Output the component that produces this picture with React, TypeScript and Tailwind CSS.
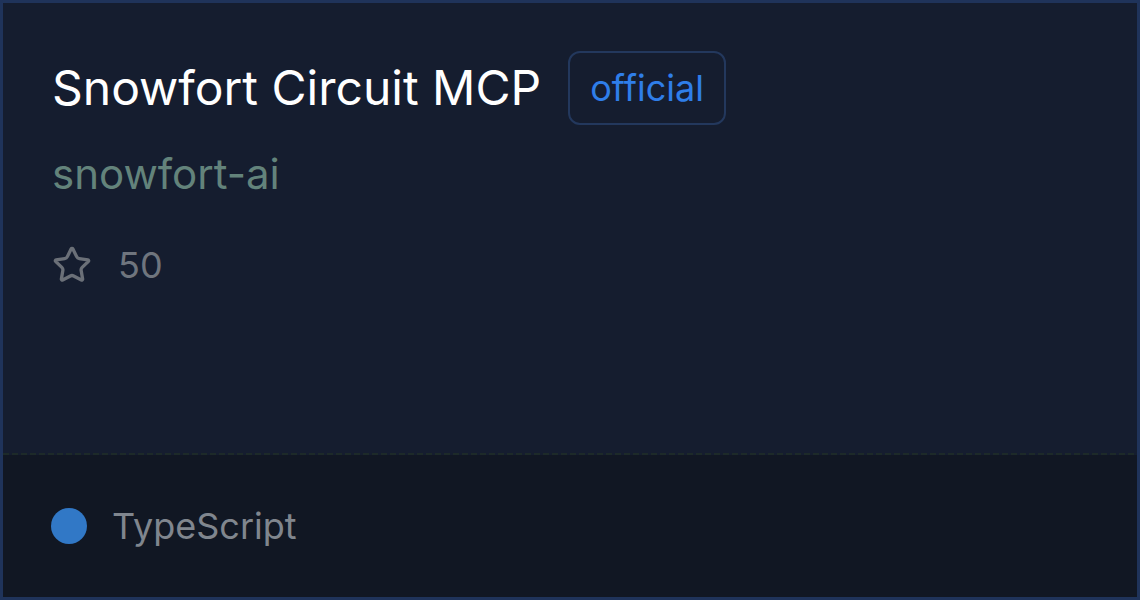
import React from "react";

export default function App() {
  return (
    <div
      className="w-[1140px] h-[600px] border-[3px] border-[#1f335a] bg-[#151d2f] flex flex-col overflow-hidden"
      style={{ fontFamily: "Inter, 'Noto Sans', sans-serif" }}
    >
      <div className="flex-1 pl-[49px] pt-[48px] flex flex-col">
        <div className="flex items-center gap-[27px]">
          <h1 className="text-[48px] leading-[58px] text-white font-normal">
            Snowfort Circuit MCP
          </h1>
          <span className="border-2 border-[#23385d] rounded-[12px] px-[20px] h-[74px] flex items-center text-[36px] leading-[44px] text-[#2f7ee9]">
            official
          </span>
        </div>
        <div className="mt-[24px] text-[42px] leading-[50px] text-[#63837b]">snowfort-ai</div>
        <div className="mt-[44px] flex items-center gap-[26px] text-[36px] leading-[44px] text-[#6f757e]">
          <svg
            width="40"
            height="40"
            viewBox="0 0 24 24"
            fill="none"
            stroke="#6b7078"
            strokeWidth="2"
            strokeLinecap="round"
            strokeLinejoin="round"
          >
            <path d="M11.525 2.295a.53.53 0 0 1 .95 0l2.31 4.679a2.123 2.123 0 0 0 1.595 1.16l5.166.756a.53.53 0 0 1 .294.904l-3.736 3.638a2.123 2.123 0 0 0-.611 1.878l.882 5.14a.53.53 0 0 1-.771.56l-4.618-2.428a2.122 2.122 0 0 0-1.973 0L6.396 21.010a.53.53 0 0 1-.77-.56l.881-5.139a2.122 2.122 0 0 0-.611-1.879L2.160 9.795a.53.53 0 0 1 .294-.906l5.165-.755a2.122 2.122 0 0 0 1.597-1.160z" />
          </svg>
          <span>50</span>
        </div>
      </div>
      <div className="h-[2px] bg-[repeating-linear-gradient(90deg,#1d2a29_0px,#1d2a29_6px,transparent_6px,transparent_9px)] bg-[#151d2f]" />
      <div className="h-[142px] bg-[#111723] pl-[48px] flex items-center gap-[25px]">
        <span className="w-[36px] h-[36px] rounded-full bg-[#3178c6]" />
        <span className="text-[36px] leading-[44px] text-[#80868e]">TypeScript</span>
      </div>
    </div>
  );
}
